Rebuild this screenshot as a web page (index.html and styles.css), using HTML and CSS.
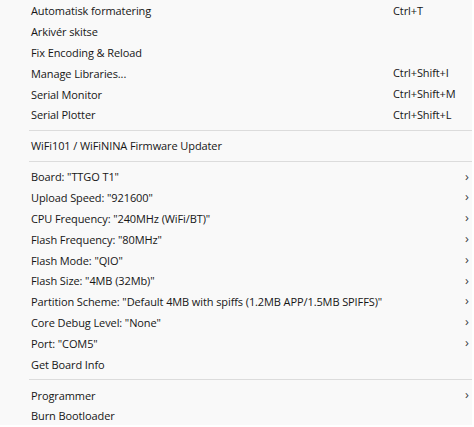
FILE: index.html
```html
<!DOCTYPE html>
<html>
<head>
<meta charset="utf-8">
<link rel="stylesheet" href="styles.css">
</head>
<body>
<div class="menu">
  <div class="item"><span class="label">Automatisk formatering</span><span class="key">Ctrl+T</span></div>
  <div class="item"><span class="label">Arkivér skitse</span></div>
  <div class="item"><span class="label">Fix Encoding &amp; Reload</span></div>
  <div class="item"><span class="label">Manage Libraries...</span><span class="key">Ctrl+Shift+I</span></div>
  <div class="item"><span class="label">Serial Monitor</span><span class="key">Ctrl+Shift+M</span></div>
  <div class="item"><span class="label">Serial Plotter</span><span class="key">Ctrl+Shift+L</span></div>
  <div class="sep"></div>
  <div class="item"><span class="label">WiFi101 / WiFiNINA Firmware Updater</span></div>
  <div class="sep"></div>
  <div class="item sub"><span class="label">Board: "TTGO T1"</span><span class="arrow">›</span></div>
  <div class="item sub"><span class="label">Upload Speed: "921600"</span><span class="arrow">›</span></div>
  <div class="item sub"><span class="label">CPU Frequency: "240MHz (WiFi/BT)"</span><span class="arrow">›</span></div>
  <div class="item sub"><span class="label">Flash Frequency: "80MHz"</span><span class="arrow">›</span></div>
  <div class="item sub"><span class="label">Flash Mode: "QIO"</span><span class="arrow">›</span></div>
  <div class="item sub"><span class="label">Flash Size: "4MB (32Mb)"</span><span class="arrow">›</span></div>
  <div class="item sub"><span class="label">Partition Scheme: "Default 4MB with spiffs (1.2MB APP/1.5MB SPIFFS)"</span><span class="arrow">›</span></div>
  <div class="item sub"><span class="label">Core Debug Level: "None"</span><span class="arrow">›</span></div>
  <div class="item sub"><span class="label">Port: "COM5"</span><span class="arrow">›</span></div>
  <div class="item"><span class="label">Get Board Info</span></div>
  <div class="sep"></div>
  <div class="item sub"><span class="label">Programmer</span><span class="arrow">›</span></div>
  <div class="item"><span class="label">Burn Bootloader</span></div>
</div>
</body>
</html>
```
FILE: styles.css
```css
html, body {
  margin: 0;
  padding: 0;
  background: #ffffff;
}
.menu {
  width: 472px;
  height: 425px;
  background: #f9f9f9;
  padding-top: 0.6px;
  box-sizing: border-box;
  font-family: "Open Sans", sans-serif;
  font-size: 11px;
  letter-spacing: -0.1px;
  color: #161616;
}
.item {
  height: 20.8px;
  display: flex;
  align-items: center;
  position: relative;
  padding-left: 31px;
}
.label {
  white-space: nowrap;
}
.key {
  position: absolute;
  left: 393px;
  top: 0;
  line-height: 20.8px;
}
.arrow {
  position: absolute;
  left: 465px;
  top: 0;
  line-height: 19px;
  font-size: 13px;
  color: #444;
}
.sep {
  height: 10.2px;
  display: flex;
  align-items: center;
  padding-left: 29px;
}
.sep::before {
  content: "";
  display: block;
  flex: 1;
  height: 1px;
  background: #dcdcdc;
}
```
